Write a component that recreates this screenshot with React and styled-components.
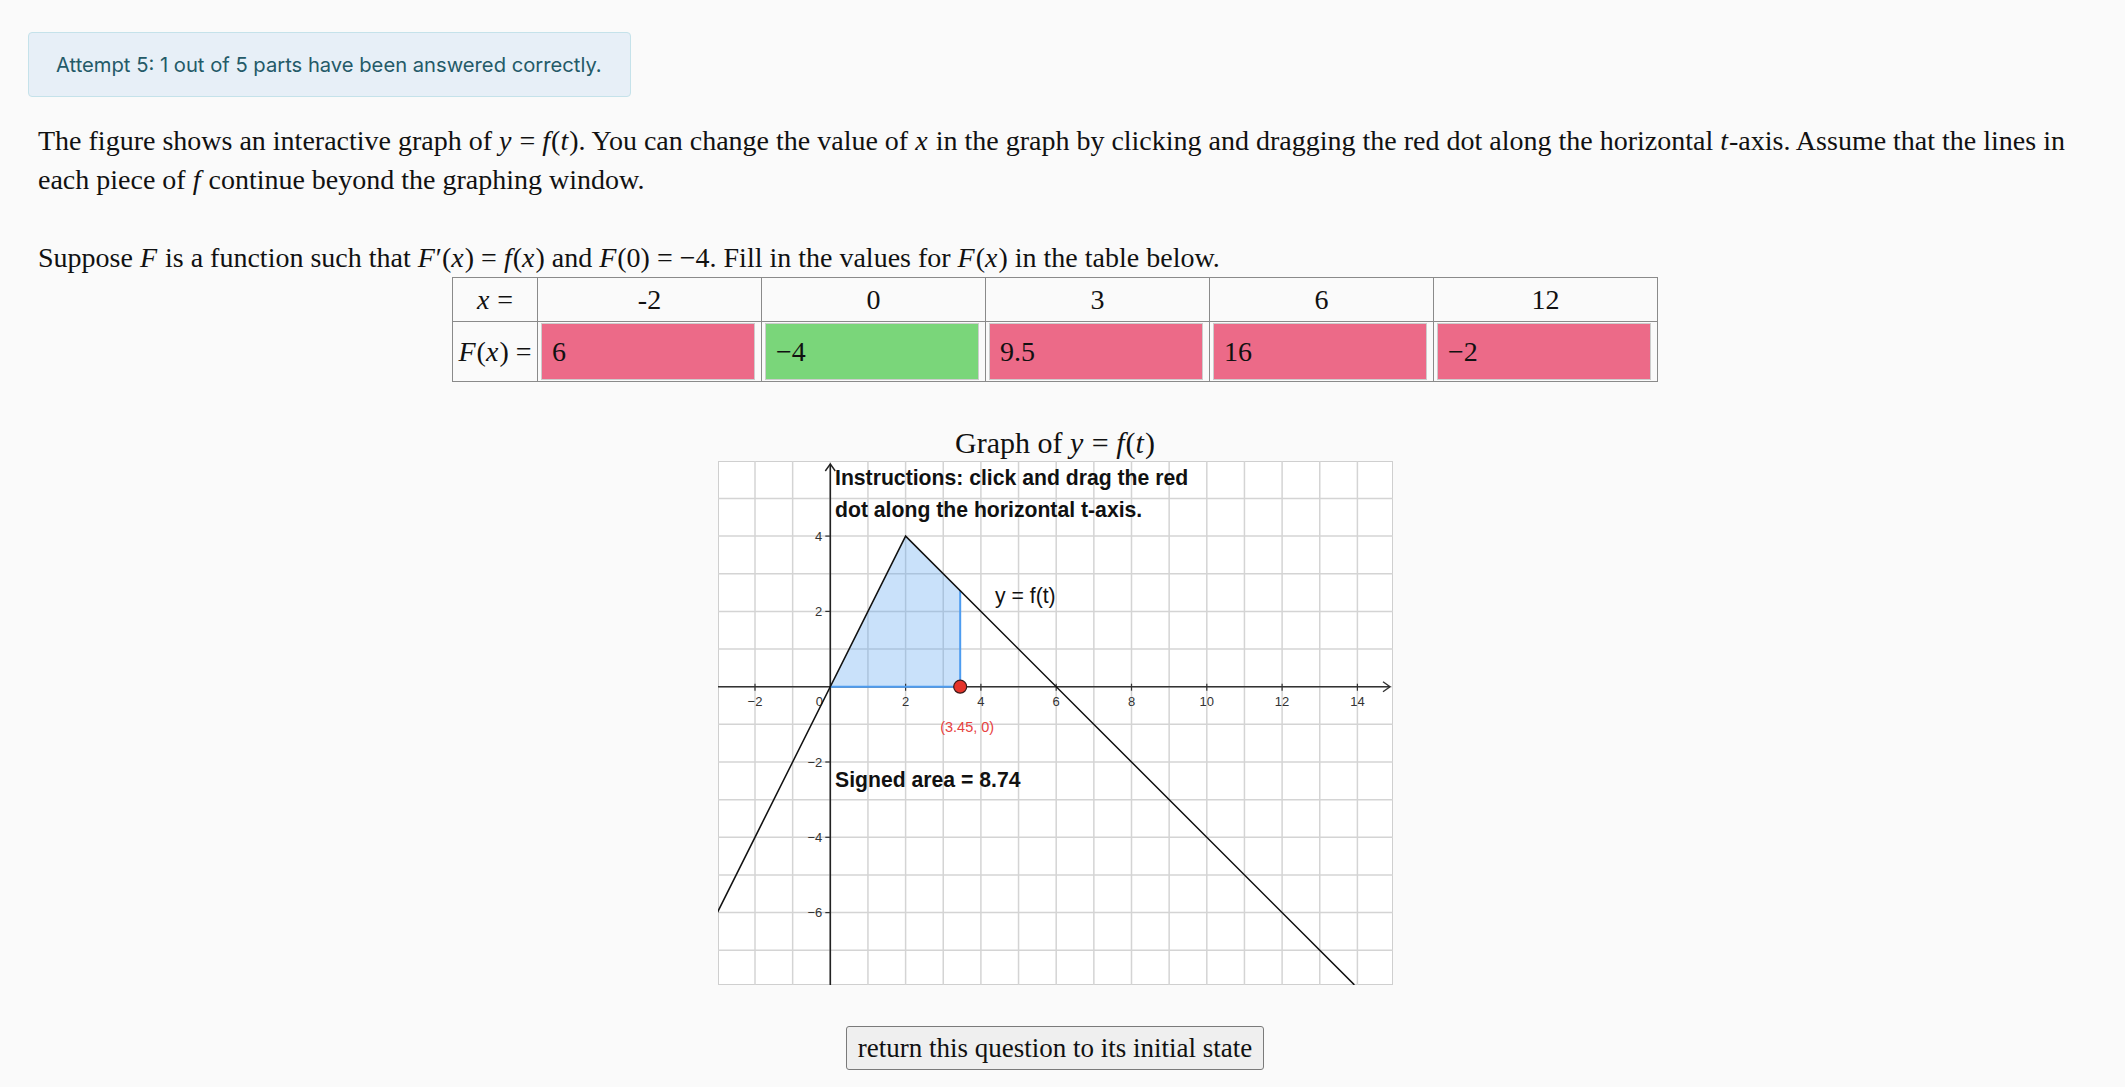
import React from "react";
import styled, { createGlobalStyle } from "styled-components";

const GlobalStyle = createGlobalStyle`
  body {
    margin: 0;
    background: #fafafa;
    color: #111;
  }
`;

// graph geometry (pixels per unit and origin inside the canvas)
const U = 37.65;
const W = 675;
const H = 524;
const OX = 112.3;
const OY = 225.7;
const px = (t) => OX + t * U;
const py = (y) => OY - y * U;

const columns = [
  { x: "-2", value: "6", status: "wrong" },
  { x: "0", value: "\u22124", status: "right" },
  { x: "3", value: "9.5", status: "wrong" },
  { x: "6", value: "16", status: "wrong" },
  { x: "12", value: "\u22122", status: "wrong" },
];

function Graph() {
  const vLines = [];
  for (let t = -2; t <= 14; t++) vLines.push(px(t));
  const hLines = [];
  for (let y = 5; y >= -7; y--) hLines.push(py(y));
  const xTicks = [-2, 2, 4, 6, 8, 10, 12, 14];
  const yTicks = [4, 2, -2, -4, -6];
  const a = 3.45;

  return (
    <GraphCanvas viewBox={`0 0 ${W} ${H}`} width={W} height={H}>
      <rect x="0.5" y="0.5" width={W - 1} height={H - 1} fill="#fff" stroke="#cfcfcf" />
      {vLines.map((x, i) => (
        <line key={"v" + i} x1={x} y1={0} x2={x} y2={H} stroke="#d4d4d4" strokeWidth="1.5" />
      ))}
      {hLines.map((y, i) => (
        <line key={"h" + i} x1={0} y1={y} x2={W} y2={y} stroke="#d4d4d4" strokeWidth="1.5" />
      ))}

      <polygon
        points={`${px(0)},${py(0)} ${px(2)},${py(4)} ${px(a)},${py(6 - a)} ${px(a)},${py(0)}`}
        fill="rgba(90,165,240,0.33)"
      />

      {/* axes */}
      <line x1={0} y1={OY} x2={W - 3} y2={OY} stroke="#333" strokeWidth="1.6" />
      <polyline points={`${W - 10},${OY - 5} ${W - 3},${OY} ${W - 10},${OY + 5}`} fill="none" stroke="#333" strokeWidth="1.4" />
      <line x1={OX} y1={H} x2={OX} y2={3} stroke="#222" strokeWidth="1.6" />
      <polyline points={`${OX - 5},${10} ${OX},${3} ${OX + 5},${10}`} fill="none" stroke="#222" strokeWidth="1.4" />

      {xTicks.map((t) => (
        <g key={"xt" + t}>
          <line x1={px(t)} y1={OY - 3} x2={px(t)} y2={OY + 4} stroke="#333" strokeWidth="1.2" />
          <TickLabel x={px(t)} y={OY + 19} textAnchor="middle">
            {t < 0 ? "\u2212" + Math.abs(t) : t}
          </TickLabel>
        </g>
      ))}
      <TickLabel x={OX - 11} y={OY + 19} textAnchor="middle">
        0
      </TickLabel>
      {yTicks.map((y) => (
        <g key={"yt" + y}>
          <line x1={OX - 5} y1={py(y)} x2={OX} y2={py(y)} stroke="#333" strokeWidth="1.2" />
          <TickLabel x={OX - 8} y={py(y) + 4.5} textAnchor="end">
            {y < 0 ? "\u2212" + Math.abs(y) : y}
          </TickLabel>
        </g>
      ))}

      {/* the region edges and the function */}
      <line x1={px(0)} y1={OY} x2={px(a)} y2={OY} stroke="#4d9cf0" strokeWidth="2" />
      <line x1={px(a)} y1={OY} x2={px(a)} y2={py(6 - a)} stroke="#4d9cf0" strokeWidth="2" />
      <polyline
        points={`${px(-3)},${py(-6)} ${px(2)},${py(4)} ${px(13.92)},${py(-7.92)}`}
        fill="none"
        stroke="#111"
        strokeWidth="1.5"
      />
      <circle cx={px(a)} cy={OY} r="6.5" fill="#e5332a" stroke="#3a1a1a" strokeWidth="1.2" />

      <GraphLabel x={px(a) + 7} y={OY + 45} textAnchor="middle" $size={14.5} $color="#e8423f">
        (3.45, 0)
      </GraphLabel>
      <GraphLabel x={117} y={24} $bold>
        Instructions: click and drag the red
      </GraphLabel>
      <GraphLabel x={117} y={55.5} $bold>
        dot along the horizontal t-axis.
      </GraphLabel>
      <GraphLabel x={277} y={142}>
        y = f(t)
      </GraphLabel>
      <GraphLabel x={117} y={325.5} $bold>
        Signed area = 8.74
      </GraphLabel>
    </GraphCanvas>
  );
}

export default function App() {
  return (
    <Page>
      <GlobalStyle />
      <Alert>Attempt 5: 1 out of 5 parts have been answered correctly.</Alert>
      <Question>
        <Para>
          The figure shows an interactive graph of <V>y</V> = <V>f</V>(<V>t</V>). You can change the
          value of <V>x</V> in the graph by clicking and dragging the red dot along the horizontal <V>t</V>-axis.
          Assume that the lines in each piece of <V>f</V> continue beyond the graphing window.
        </Para>
        <Para $last>
          Suppose <V>F</V> is a function such that <V>F</V>′(<V>x</V>) = <V>f</V>(<V>x</V>) and{" "}
          <V>F</V>(0) = −4. Fill in the values for <V>F</V>(<V>x</V>) in the table below.
        </Para>
        <AnswerTable>
          <tbody>
            <tr>
              <LabelCell $head>
                <V>x</V> =
              </LabelCell>
              {columns.map((c) => (
                <HeadCell key={c.x}>{c.x}</HeadCell>
              ))}
            </tr>
            <tr>
              <LabelCell>
                <V>F</V>(<V>x</V>) =
              </LabelCell>
              {columns.map((c) => (
                <AnswerCell key={c.x}>
                  <AnswerBox $status={c.status}>{c.value}</AnswerBox>
                </AnswerCell>
              ))}
            </tr>
          </tbody>
        </AnswerTable>
        <Figure>
          <GraphTitle>
            Graph of <V>y</V> = <V>f</V>(<V>t</V>)
          </GraphTitle>
          <Graph />
        </Figure>
        <ButtonRow>
          <ResetButton type="button">return this question to its initial state</ResetButton>
        </ButtonRow>
      </Question>
    </Page>
  );
}

const Page = styled.div`
  padding: 32px 43px 0 28px;
`;

const Alert = styled.div`
  box-sizing: border-box;
  width: fit-content;
  height: 65px;
  display: flex;
  align-items: center;
  padding: 0 28px 0 27px;
  white-space: nowrap;
  background: #e7eff7;
  border: 1px solid #c5e2ea;
  border-radius: 4px;
  color: #245a68;
  font-family: Inter, "Open Sans", sans-serif;
  font-size: 20.2px;
`;

const Question = styled.div`
  padding: 24px 10px 0;
  font-family: "Liberation Serif", "Times New Roman", serif;
  font-size: 28px;
  color: #111;
`;

const Para = styled.p`
  margin: 0 0 ${(p) => (p.$last ? "0" : "39px")};
  line-height: 39px;
`;

const V = styled.i`
  font-family: "Liberation Serif", "Times New Roman", serif;
  font-style: italic;
  padding-right: 1px;
`;

const AnswerTable = styled.table`
  margin: 0 auto;
  border-collapse: collapse;
`;

const LabelCell = styled.td`
  box-sizing: border-box;
  width: 85px;
  height: ${(p) => (p.$head ? "44px" : "60px")};
  padding: 0 1px;
  border: 1px solid #8a8a8a;
  text-align: center;
  white-space: nowrap;
`;

const HeadCell = styled.td`
  box-sizing: border-box;
  width: 224px;
  height: 44px;
  border: 1px solid #8a8a8a;
  text-align: center;
`;

const AnswerCell = styled.td`
  box-sizing: border-box;
  width: 224px;
  height: 60px;
  padding: 1px 6px 1px 3px;
  border: 1px solid #8a8a8a;
`;

const AnswerBox = styled.div`
  box-sizing: border-box;
  height: 57px;
  display: flex;
  align-items: center;
  padding: 0 10px;
  border: 1px solid #cdcdcd;
  background: ${(p) => (p.$status === "right" ? "#7ad67a" : "#ec6a88")};
`;

const Figure = styled.div`
  display: flex;
  flex-direction: column;
  align-items: center;
  margin-top: 42px;
`;

const GraphTitle = styled.div`
  font-size: 30px;
  line-height: 37px;
  text-align: center;
`;

const GraphCanvas = styled.svg`
  display: block;
`;

const GraphLabel = styled.text`
  font-family: "Liberation Sans", Arial, sans-serif;
  font-size: ${(p) => p.$size || 21.2}px;
  font-weight: ${(p) => (p.$bold ? "bold" : "normal")};
  fill: ${(p) => p.$color || "#111"};
`;

const TickLabel = styled.text`
  font-family: "Liberation Sans", Arial, sans-serif;
  font-size: 13px;
  fill: #333;
`;

const ButtonRow = styled.div`
  display: flex;
  justify-content: center;
  margin-top: 41px;
`;

const ResetButton = styled.button`
  height: 44px;
  padding: 0 11px;
  background: #efefef;
  border: 1px solid #7a7a7a;
  border-radius: 3px;
  font-family: "Liberation Serif", "Times New Roman", serif;
  font-size: 27px;
  color: #111;
`;
